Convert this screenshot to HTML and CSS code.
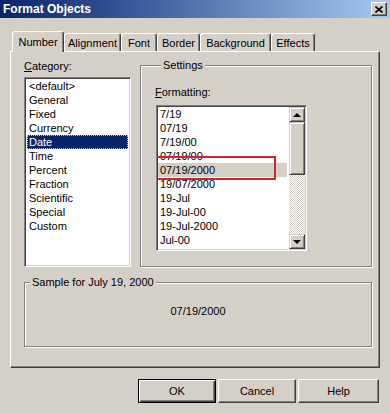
FILE: index.html
```html
<!DOCTYPE html>
<html lang="en">
<head>
  <meta charset="UTF-8">
  <title>Format Objects</title>
  <link rel="stylesheet" href="styles.css">
</head>
<body>
  <div class="window">
    <div class="titlebar">
      <span class="title">Format Objects</span>
      <div class="close">
        <svg width="8" height="7" viewBox="0 0 8 7"><path d="M0.5 0.5 L7.5 6.5 M7.5 0.5 L0.5 6.5" stroke="#000" stroke-width="1.7"/></svg>
      </div>
    </div>

    <div class="tabs">
      <div class="tab active w-number">Number</div>
      <div class="tab w-align">Alignment</div>
      <div class="tab w-font">Font</div>
      <div class="tab w-border">Border</div>
      <div class="tab w-bg">Background</div>
      <div class="tab w-effects">Effects</div>
    </div>

    <div class="panel">
      <div class="row">
        <div class="cat-col">
          <div class="label"><u>C</u>ategory:</div>
          <div class="listbox cat-list">
            <div class="item">&lt;default&gt;</div>
            <div class="item">General</div>
            <div class="item">Fixed</div>
            <div class="item">Currency</div>
            <div class="item selected">Date</div>
            <div class="item">Time</div>
            <div class="item">Percent</div>
            <div class="item">Fraction</div>
            <div class="item">Scientific</div>
            <div class="item">Special</div>
            <div class="item">Custom</div>
          </div>
        </div>

        <div class="group settings">
          <div class="group-title">Settings</div>
          <div class="label fmt-label"><u>F</u>ormatting:</div>
          <div class="listbox fmt-list">
            <div class="items">
              <div class="item">7/19</div>
              <div class="item">07/19</div>
              <div class="item">7/19/00</div>
              <div class="item">07/19/00</div>
              <div class="item current">07/19/2000</div>
              <div class="item">19/07/2000</div>
              <div class="item">19-Jul</div>
              <div class="item">19-Jul-00</div>
              <div class="item">19-Jul-2000</div>
              <div class="item">Jul-00</div>
              <div class="item">Jul-2000</div>
            </div>
            <div class="scrollbar">
              <div class="sb-btn"><span class="arrow up"></span></div>
              <div class="sb-thumb"></div>
              <div class="sb-track"></div>
              <div class="sb-btn"><span class="arrow down"></span></div>
            </div>
            <div class="mark"></div>
          </div>
        </div>
      </div>

      <div class="group sample">
        <div class="group-title">Sample for July 19, 2000</div>
        <div class="sample-value">07/19/2000</div>
      </div>
    </div>

    <div class="buttons">
      <button class="btn default w-ok">OK</button>
      <button class="btn w-cancel">Cancel</button>
      <button class="btn w-help">Help</button>
    </div>
  </div>
</body>
</html>
```

FILE: styles.css
```css
body {
  margin: 0;
  background: #d4d0c8;
  font-family: 'Liberation Sans', Arial, sans-serif;
  font-size: 11px;
  color: #000;
}
.window {
  width: 390px;
  height: 413px;
  overflow: hidden;
  background: #d4d0c8;
}
.titlebar {
  height: 18px;
  display: flex;
  align-items: center;
  padding-left: 3px;
  background: linear-gradient(to right, #0a246a, #3a5a9a 35%, #a6caf0);
  color: #fff;
  font-weight: bold;
  font-size: 12px;
}
.close {
  margin-left: auto;
  margin-right: 3px;
  width: 16px;
  height: 14px;
  box-sizing: border-box;
  display: flex;
  align-items: center;
  justify-content: center;
  background: #d4d0c8;
  border: 1px solid;
  border-color: #fff #404040 #404040 #fff;
  box-shadow: inset -1px -1px 0 #808080;
}

/* tabs */
.tabs {
  height: 33px;
  box-sizing: border-box;
  display: flex;
  align-items: flex-end;
  padding-left: 12px;
}
.tab {
  height: 18px;
  box-sizing: border-box;
  padding-top: 2px;
  line-height: 14px;
  text-align: center;
  border: 1px solid #fff;
  border-bottom: none;
  border-right-color: #404040;
  border-radius: 3px 3px 0 0;
  box-shadow: inset -1px 0 0 #808080;
}
.tab.active {
  height: 21px;
  padding-top: 3px;
  margin-bottom: -1px;
  position: relative;
  z-index: 2;
  background: #d4d0c8;
}
.w-number { width: 52px; }
.w-align { width: 57px; }
.w-font { width: 36px; }
.w-border { width: 43px; }
.w-bg { width: 71px; }
.w-effects { width: 44px; }

/* panel */
.panel {
  margin-left: 10px;
  width: 370px;
  height: 317px;
  box-sizing: border-box;
  padding: 8px 0 0 13px;
  border: 1px solid;
  border-color: #fff #404040 #404040 #fff;
  box-shadow: inset -1px -1px 0 #808080;
}
.row {
  display: flex;
  align-items: flex-start;
}
.label {
  line-height: 13px;
}
.cat-col {
  width: 107px;
}

.listbox {
  box-sizing: border-box;
  background: #fff;
  border: 1px solid;
  border-color: #808080 #fff #fff #808080;
  box-shadow: inset 1px 1px 0 #404040, inset -1px -1px 0 #d4d0c8;
  padding: 1px;
  overflow: hidden;
}
.item {
  height: 14px;
  line-height: 14px;
  padding-left: 2px;
  white-space: nowrap;
}
.cat-list {
  margin-top: 4px;
  height: 190px;
}
.cat-list .item {
  margin: 0 1px 0 1px;
}
.cat-list .selected {
  background: #0a246a;
  color: #fff;
  outline: 1px dotted #c8c0a0;
  outline-offset: -1px;
}

/* group boxes */
.group {
  box-sizing: border-box;
  border: 1px solid #808080;
  box-shadow: inset 1px 1px 0 #fff, 1px 1px 0 #fff;
}
.group-title {
  width: max-content;
  margin: -7px 0 0 5px;
  padding: 0 2px;
  line-height: 13px;
  background: #d4d0c8;
}
.settings {
  margin: 5px 0 0 9px;
  width: 232px;
  height: 202px;
  padding-left: 15px;
}
.fmt-label {
  margin: 14px 0 0 -1px;
}
.fmt-list {
  position: relative;
  margin-top: 6px;
  width: 151px;
  height: 146px;
  display: flex;
}
.fmt-list .items {
  flex: 1;
  padding-top: 0;
}
.fmt-list .item {
  margin-right: 2px;
  padding-left: 2px;
}
.fmt-list .current {
  background: #d4d0c8;
}
.mark {
  position: absolute;
  left: -2px;
  top: 50px;
  width: 121px;
  height: 24px;
  box-sizing: border-box;
  border: 2px solid #d0242e;
}

/* scrollbar */
.scrollbar {
  width: 16px;
  display: flex;
  flex-direction: column;
}
.sb-btn, .sb-thumb {
  box-sizing: border-box;
  background: #d4d0c8;
  border: 1px solid;
  border-color: #d4d0c8 #404040 #404040 #d4d0c8;
  box-shadow: inset 1px 1px 0 #fff, inset -1px -1px 0 #808080;
}
.sb-btn {
  height: 15px;
  display: flex;
  align-items: center;
  justify-content: center;
}
.sb-thumb {
  height: 53px;
}
.sb-track {
  flex: 1;
  background: repeating-conic-gradient(#fff 0 25%, #d4d0c8 0 50%) 0 0 / 2px 2px;
}
.arrow {
  width: 0;
  height: 0;
  border-left: 4px solid transparent;
  border-right: 4px solid transparent;
}
.arrow.up {
  border-bottom: 4px solid #000;
}
.arrow.down {
  border-top: 4px solid #000;
}

.sample {
  margin-top: 15px;
  width: 348px;
  height: 65px;
}
.sample-value {
  margin-top: 16px;
  line-height: 13px;
  text-align: center;
}

/* buttons */
.buttons {
  display: flex;
  justify-content: flex-end;
  gap: 2px;
  margin-top: 11px;
  padding-right: 11px;
}
.btn {
  height: 24px;
  box-sizing: border-box;
  font-family: 'Liberation Sans', Arial, sans-serif;
  font-size: 11px;
  color: #000;
  background: #d4d0c8;
  border: 1px solid;
  border-color: #fff #404040 #404040 #fff;
  box-shadow: inset -1px -1px 0 #808080;
  padding: 0;
}
.btn.default {
  border-color: #000;
  box-shadow: inset 1px 1px 0 #fff, inset -1px -1px 0 #404040, inset -2px -2px 0 #808080;
}
.w-ok { width: 78px; }
.w-cancel { width: 78px; }
.w-help { width: 81px; }
```
